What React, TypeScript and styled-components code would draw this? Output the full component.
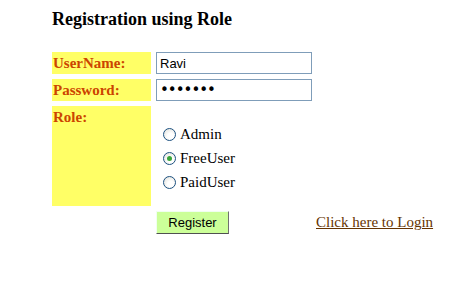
import React from "react";
import styled, { createGlobalStyle } from "styled-components";

const Global = createGlobalStyle`
  html, body { margin: 0; padding: 0; background: #fff; }
  body { font-family: "Liberation Serif", "Times New Roman", serif; }
`;

const Page = styled.div`
  padding: 9px 0 0 52px;
  width: 462px;
  height: 298px;
  box-sizing: border-box;
`;

const Title = styled.h1`
  margin: 0 0 23px 0;
  font-size: 18px;
  line-height: 20px;
  font-weight: bold;
  color: #000;
`;

const Form = styled.div`
  display: flex;
  flex-direction: column;
  gap: 5px;
`;

const Row = styled.div<{ $h: number }>`
  display: flex;
  gap: 5px;
  height: ${(p) => p.$h}px;
`;

const Label = styled.div`
  width: 99px;
  background: #ffff66;
  color: #cc4400;
  font-weight: bold;
  font-size: 15px;
  line-height: 22px;
  padding-left: 1px;
  box-sizing: border-box;
`;

const Field = styled.div<{ $center?: boolean }>`
  width: 156px;
  display: flex;
  flex-direction: column;
  justify-content: ${(p) => (p.$center ? "center" : "flex-start")};
`;

const Input = styled.input<{ $dots?: boolean }>`
  width: 156px;
  height: 22px;
  box-sizing: border-box;
  border: 1px solid #7f9db9;
  padding: 1px 3px;
  font-family: ${(p) => (p.$dots ? `"DejaVu Sans", sans-serif` : `"Liberation Sans", Arial, sans-serif`)};
  font-size: ${(p) => (p.$dots ? "15px" : "13px")};
  letter-spacing: ${(p) => (p.$dots ? "-1px" : "normal")};
  color: #000;
  outline: none;
  background: #fff;
`;

const RadioGroup = styled.div`
  display: flex;
  flex-direction: column;
  gap: 6px;
  padding: 4px 0 0 7px;
`;

const RadioRow = styled.label`
  display: flex;
  align-items: center;
  gap: 4px;
  height: 18px;
  font-size: 15px;
  color: #000;
`;

const RadioDot = styled.span<{ $checked?: boolean }>`
  width: 11px;
  height: 11px;
  border-radius: 50%;
  border: 1px solid #1c5180;
  background: radial-gradient(circle at 60% 65%, #ffffff 30%, #dcdcd5 100%);
  display: flex;
  align-items: center;
  justify-content: center;
  &::after {
    content: "";
    width: 5px;
    height: 5px;
    border-radius: 50%;
    background: ${(p) => (p.$checked ? "#3aa53a" : "transparent")};
  }
`;

const BottomRow = styled.div`
  display: flex;
  align-items: center;
  padding-left: 104px;
`;

const Button = styled.button`
  width: 73px;
  height: 23px;
  background: #ccff99;
  border: 1px solid;
  border-color: #f0fff0 #707070 #505050 #f0fff0;
  font-family: "Liberation Sans", Arial, sans-serif;
  font-size: 13px;
  color: #000;
  padding: 0;
`;

const Link = styled.a`
  margin-left: 87px;
  font-size: 15px;
  color: #663300;
  text-decoration: underline;
`;

export default function App() {
  return (
    <>
      <Global />
      <Page>
        <Title>Registration using Role</Title>
        <Form>
          <Row $h={22}>
            <Label>UserName:</Label>
            <Field>
              <Input type="text" defaultValue="Ravi" />
            </Field>
          </Row>
          <Row $h={22}>
            <Label>Password:</Label>
            <Field>
              <Input $dots type="password" defaultValue="1234567" />
            </Field>
          </Row>
          <Row $h={100}>
            <Label>Role:</Label>
            <Field $center>
              <RadioGroup>
                <RadioRow>
                  <RadioDot />
                  Admin
                </RadioRow>
                <RadioRow>
                  <RadioDot $checked />
                  FreeUser
                </RadioRow>
                <RadioRow>
                  <RadioDot />
                  PaidUser
                </RadioRow>
              </RadioGroup>
            </Field>
          </Row>
          <BottomRow>
            <Button>Register</Button>
            <Link href="#">Click here to Login</Link>
          </BottomRow>
        </Form>
      </Page>
    </>
  );
}
